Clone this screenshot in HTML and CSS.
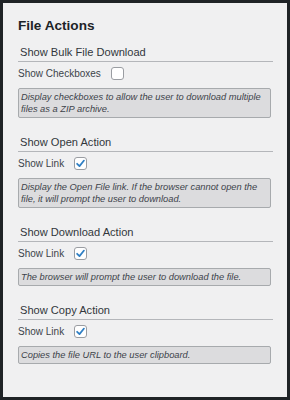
FILE: index.html
```html
<!DOCTYPE html>
<html lang="en">
<head>
    <meta charset="UTF-8">
    <meta name="viewport" content="width=device-width, initial-scale=1.0">
    <title>File Actions</title>
    <link rel="stylesheet" href="styles.css">
</head>
<body>

<div class="panel">
    <h2 class="panel-title">File Actions</h2>

    <!-- Bulk download -->
    <div class="section">
        <h3 class="section-title">Show Bulk File Download</h3>
        <div class="option-row">
            <span class="option-label">Show Checkboxes</span>
            <span class="checkbox"></span>
        </div>
        <p class="description">Display checkboxes to allow the user to download multiple files as a ZIP archive.</p>
    </div>

    <!-- Open action -->
    <div class="section">
        <h3 class="section-title">Show Open Action</h3>
        <div class="option-row">
            <span class="option-label">Show Link</span>
            <span class="checkbox checked">
                <svg viewBox="0 0 12 12" width="11" height="11"><path d="M2.3 6.3 L4.9 8.9 L9.8 2.8" fill="none" stroke="#2f7fc4" stroke-width="1.9" stroke-linecap="round" stroke-linejoin="round"/></svg>
            </span>
        </div>
        <p class="description">Display the Open File link. If the browser cannot open the file, it will prompt the user to download.</p>
    </div>

    <!-- Download action -->
    <div class="section">
        <h3 class="section-title">Show Download Action</h3>
        <div class="option-row">
            <span class="option-label">Show Link</span>
            <span class="checkbox checked">
                <svg viewBox="0 0 12 12" width="11" height="11"><path d="M2.3 6.3 L4.9 8.9 L9.8 2.8" fill="none" stroke="#2f7fc4" stroke-width="1.9" stroke-linecap="round" stroke-linejoin="round"/></svg>
            </span>
        </div>
        <p class="description">The browser will prompt the user to download the file.</p>
    </div>

    <!-- Copy action -->
    <div class="section">
        <h3 class="section-title">Show Copy Action</h3>
        <div class="option-row">
            <span class="option-label">Show Link</span>
            <span class="checkbox checked">
                <svg viewBox="0 0 12 12" width="11" height="11"><path d="M2.3 6.3 L4.9 8.9 L9.8 2.8" fill="none" stroke="#2f7fc4" stroke-width="1.9" stroke-linecap="round" stroke-linejoin="round"/></svg>
            </span>
        </div>
        <p class="description">Copies the file URL to the user clipboard.</p>
    </div>
</div>

</body>
</html>
```

FILE: styles.css
```css
/* Page */
body {
    margin: 0;
    padding: 3px;
    background-color: #1f2326;
    font-family: "Liberation Sans", Arial, sans-serif;
}

/* Settings panel */
.panel {
    height: 394px;
    box-sizing: border-box;
    background-color: #f0f0f1;
    padding: 15px 14px 0 15px;
}

.panel-title {
    margin: 0;
    font-size: 13.6px;
    line-height: 16px;
    font-weight: bold;
    color: #1d2327;
}

/* Sections */
.section {
    margin-top: 17px;
}

.section:first-of-type {
    margin-top: 11px;
}

.section-title {
    margin: 0;
    padding: 0 0 2px 2px;
    font-size: 11.1px;
    line-height: 14px;
    font-weight: normal;
    color: #32373c;
    border-bottom: 1px solid #b4b6ba;
}

.option-row {
    display: flex;
    align-items: center;
    gap: 10px;
    margin-top: 5px;
    height: 13px;
}

.option-label {
    font-size: 10px;
    line-height: 13px;
    color: #3c434a;
}

/* Fake checkbox */
.checkbox {
    width: 13px;
    height: 13px;
    box-sizing: border-box;
    border: 1px solid #9a9da2;
    border-radius: 3px;
    background-color: #ffffff;
    display: flex;
    align-items: center;
    justify-content: center;
}

/* Help text */
.description {
    margin: 8px 2px 0 0;
    padding: 2px 2px;
    font-size: 9.3px;
    line-height: 12px;
    font-style: italic;
    color: #3c434a;
    background-color: #dcdcde;
    border: 1px solid #a7aaad;
    border-radius: 2px;
}
```
